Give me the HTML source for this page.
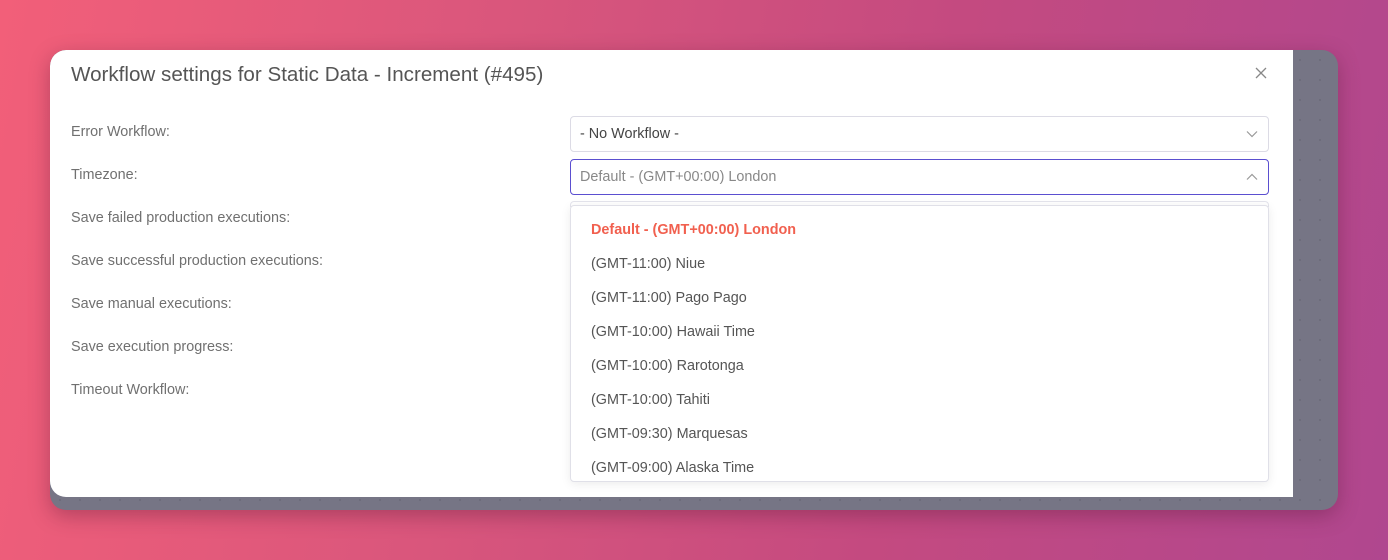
<!DOCTYPE html>
<html><head><style>
*{margin:0;padding:0;box-sizing:border-box}
body{width:1388px;height:560px;overflow:hidden;position:relative;font-family:"Liberation Sans","DejaVu Sans",sans-serif;background:linear-gradient(100deg,#f25f79 0%,#d9567c 35%,#c44a80 65%,#b0478f 100%)}
.win{position:absolute;left:50px;top:50px;width:1288px;height:460px;border-radius:16px;background:#767585;background-image:radial-gradient(circle,#6a6978 0.8px,transparent 1.1px);background-size:20px 20px;box-shadow:0 6px 20px rgba(80,20,50,.35);overflow:hidden}
.modal{position:absolute;left:0;top:0;width:1243px;height:447px;background:#fff;border-radius:16px 0 0 16px}
.title{position:absolute;left:21px;top:13px;font-size:20.6px;color:#555;}
.close{position:absolute;left:1205px;top:17px}
.lbl{position:absolute;left:21px;font-size:14.4px;color:#707070}
.sel{position:absolute;left:520px;width:699px;height:36px;border:1px solid #dcdbe5;border-radius:4px;font-size:14.4px;padding:9px 9px;color:#444}
.sel svg{position:absolute;right:10px;top:13px}
.dd{position:absolute;left:520px;top:155px;width:699px;height:277px;border:1px solid #e0e0e8;border-radius:4px;background:#fff;box-shadow:0 2px 10px rgba(0,0,0,.08);overflow:hidden}
.dd div{height:34px;line-height:34px;padding-left:20px;font-size:14.4px;color:#555}
</style></head><body>
<div class="win"><div class="modal">
<div class="title">Workflow settings for Static Data - Increment (#495)</div>
<svg class="close" width="12" height="12" viewBox="0 0 12 12"><path d="M1 1L11 11M11 1L1 11" stroke="#888" stroke-width="1.3"/></svg>
<div class="lbl" style="top:74px">Error Workflow:</div>
<div class="lbl" style="top:117px">Timezone:</div>
<div class="lbl" style="top:160px">Save failed production executions:</div>
<div class="lbl" style="top:203px">Save successful production executions:</div>
<div class="lbl" style="top:246px">Save manual executions:</div>
<div class="lbl" style="top:289px">Save execution progress:</div>
<div class="lbl" style="top:332px">Timeout Workflow:</div>
<div class="sel" style="top:66px">- No Workflow -<svg width="12" height="8" viewBox="0 0 12 8"><path d="M1 1.5L6 6.5L11 1.5" fill="none" stroke="#999" stroke-width="1.2"/></svg></div>
<div class="sel" style="top:109px;border-color:#5b4fd0;color:#888">Default - (GMT+00:00) London<svg width="12" height="8" viewBox="0 0 12 8"><path d="M1 6.5L6 1.5L11 6.5" fill="none" stroke="#999" stroke-width="1.2"/></svg></div>
<div style="position:absolute;left:520px;top:151px;width:699px;height:6px;border:1px solid #e4e4ec;border-bottom:none;border-radius:4px 4px 0 0"></div>
<div class="dd">
<div style="margin-top:7px;color:#f1604f;font-weight:bold">Default - (GMT+00:00) London</div>
<div>(GMT-11:00) Niue</div>
<div>(GMT-11:00) Pago Pago</div>
<div>(GMT-10:00) Hawaii Time</div>
<div>(GMT-10:00) Rarotonga</div>
<div>(GMT-10:00) Tahiti</div>
<div>(GMT-09:30) Marquesas</div>
<div>(GMT-09:00) Alaska Time</div>
</div>
</div></div>
</body></html>
